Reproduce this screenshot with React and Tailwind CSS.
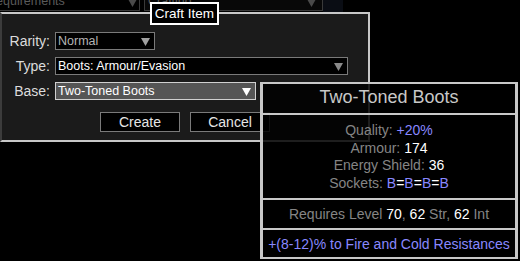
import React from "react";

function Tri({ color, className = "" }) {
  return (
    <svg width="9" height="9" viewBox="0 0 9 9" className={className}>
      <polygon points="0,1 9,1 4.5,9" fill={color} />
    </svg>
  );
}

function Select({ width, text, textColor, bg, border, triColor }) {
  return (
    <div
      className={`flex h-[18px] items-center justify-between border pl-[2px] pr-[4px] ${width} ${bg} ${border}`}
    >
      <span className={`text-[12.5px] leading-none ${textColor}`}>{text}</span>
      <Tri color={triColor} />
    </div>
  );
}

function Row({ label, children }) {
  return (
    <div className="flex h-[18px] items-center">
      <div className="w-[53px] pr-[5px] text-right leading-[18px] text-[#dcdcdc]">{label}</div>
      {children}
    </div>
  );
}

export default function App() {
  return (
    <div
      className="relative h-[261px] w-[520px] overflow-hidden bg-black text-[14px]"
      style={{ fontFamily: '"Liberation Sans", Arial, sans-serif' }}
    >
      {/* top strip (partially visible controls) */}
      <div className="flex h-[12px] items-start">
        <div className="-mt-[10px] ml-[-20px] flex h-[21px] w-[160px] items-end justify-between border border-[#3a3a3a] bg-black pb-[3px] pl-[6px] pr-[2px]">
          <span className="text-[12.5px] leading-none text-[#5a5a5a]">Requirements</span>
          <Tri color="#4a4a4a" />
        </div>
        <div className="-mt-[10px] ml-[4px] flex h-[21px] w-[179px] items-end justify-between border border-[#3a3a3a] bg-[#080808] pb-[3px] pl-[3px] pr-[6px]">
          <span className="text-[12.5px] leading-none text-[#5a5a5a]">Crafting</span>
          <Tri color="#4a4a4a" />
        </div>
        <div className="h-[12px] w-[20px] bg-[#0a0d14]" />
      </div>

      {/* Craft dialog */}
      <div className="flex h-[130px] w-[370px] flex-col gap-[7px] border-2 border-[#c8c8c8] border-l-[#3c3c3c] bg-[#1b1b1b] pt-[18px]">
        <Row label="Rarity:">
          <Select
            width="w-[100px]"
            text="Normal"
            textColor="text-[#b4b4b4]"
            bg="bg-black"
            border="border-[#7a7a7a]"
            triColor="#a0a0a0"
          />
        </Row>
        <Row label="Type:">
          <Select
            width="w-[293px]"
            text="Boots: Armour/Evasion"
            textColor="text-white"
            bg="bg-black"
            border="border-[#7a7a7a]"
            triColor="#8a8a8a"
          />
        </Row>
        <Row label="Base:">
          <Select
            width="w-[201px]"
            text="Two-Toned Boots"
            textColor="text-white"
            bg="bg-[#555555]"
            border="border-[#d0d0d0]"
            triColor="#ffffff"
          />
        </Row>
        <div className="mt-[5px] flex gap-[10px] pl-[98px]">
          <button className="h-[20px] w-[80px] border border-[#7a7a7a] bg-black leading-none text-[#e6e6e6]">
            Create
          </button>
          <button className="h-[20px] w-[80px] border border-[#7a7a7a] bg-black leading-none text-[#e6e6e6]">
            Cancel
          </button>
        </div>
      </div>

      {/* title badge */}
      <div className="absolute left-[150px] top-[2px] flex h-[23px] w-[69px] items-center justify-center border-2 border-white bg-black text-[13.5px] leading-none text-white">
        Craft Item
      </div>

      {/* item tooltip */}
      <div className="absolute left-[260px] top-[82px] flex w-[258px] flex-col border-x-[3px] border-y-2 border-[#c8c8c8] bg-black/85 text-center">
        <div className="flex h-[29px] items-center justify-center pb-[3px] text-[18px] leading-none text-[#c8c8c8]">
          Two-Toned Boots
        </div>
        <div className="h-[2px] bg-[#c8c8c8]" />
        <div className="flex h-[83px] flex-col pt-[7px] leading-[17.7px] text-[#858585]">
          <div>
            Quality: <span className="text-[#8888ff]">+20%</span>
          </div>
          <div>
            Armour: <span className="text-white">174</span>
          </div>
          <div>
            Energy Shield: <span className="text-white">36</span>
          </div>
          <div>
            Sockets:{" "}
            <span className="text-[#8888ff]">B</span>
            <span className="text-white">=</span>
            <span className="text-[#8888ff]">B</span>
            <span className="text-white">=</span>
            <span className="text-[#8888ff]">B</span>
            <span className="text-white">=</span>
            <span className="text-[#8888ff]">B</span>
          </div>
        </div>
        <div className="h-[2px] bg-[#c8c8c8]" />
        <div className="flex h-[28px] items-center justify-center leading-none text-[#858585]">
          <span>
            Requires Level <span className="text-white">70</span>,{" "}
            <span className="text-white">62</span> Str,{" "}
            <span className="text-white">62</span> Int
          </span>
        </div>
        <div className="h-[2px] bg-[#c8c8c8]" />
        <div className="flex h-[27px] items-center justify-center leading-none text-[#8888ff]">
          +(8-12)% to Fire and Cold Resistances
        </div>
      </div>
    </div>
  );
}
